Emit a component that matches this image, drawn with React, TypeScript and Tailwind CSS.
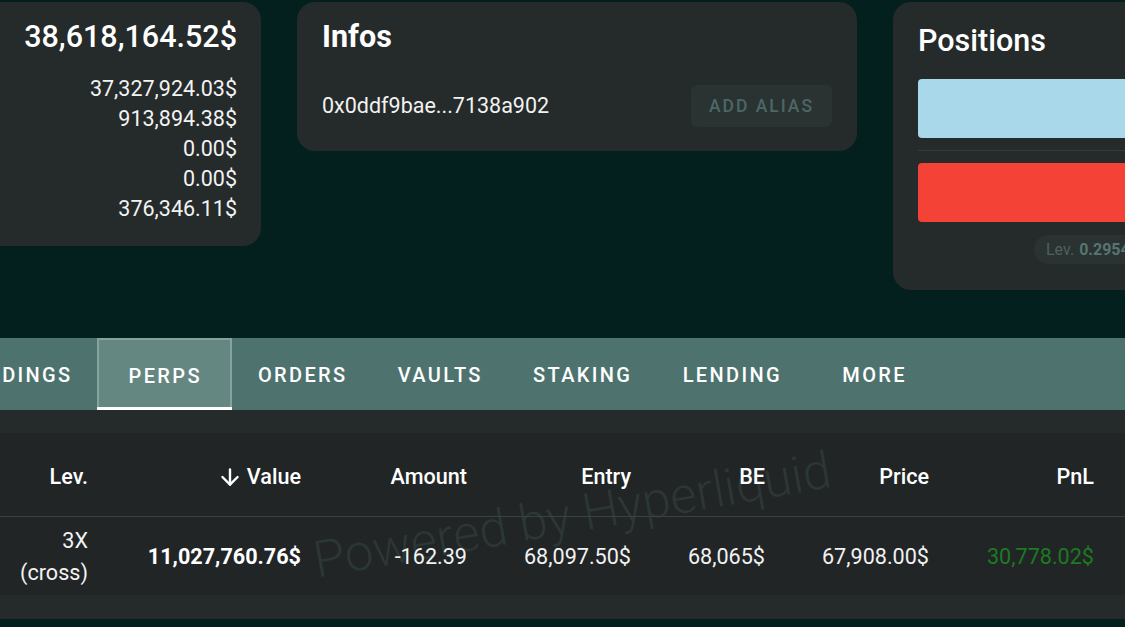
import { ArrowDown } from "lucide-react";

const balances = ["37,327,924.03$", "913,894.38$", "0.00$", "0.00$", "376,346.11$"];

const tabs = ["HOLDINGS", "PERPS", "ORDERS", "VAULTS", "STAKING", "LENDING", "MORE"];

const cols = "grid grid-cols-[88px_213px_166px_164px_134px_164px_165px]";

function Tab({ label, active }: { label: string; active?: boolean }) {
  if (active) {
    return (
      <div className="relative flex h-full min-w-[135px] items-center justify-center border-2 border-b-0 border-[#86a49f] bg-[#648782] px-6">
        <span className="pl-[2.35px] pt-[1px] text-[20px] font-medium tracking-[2.35px] text-white">{label}</span>
        <div className="absolute -left-[2px] -right-[2px] bottom-0 h-[3px] bg-white" />
      </div>
    );
  }
  return (
    <div className="flex h-full min-w-[135px] items-center justify-center px-6">
      <span className="pl-[2.35px] pt-[1px] text-[20px] font-medium tracking-[2.35px] text-white">{label}</span>
    </div>
  );
}

export default function App() {
  return (
    <div
      className="relative h-[627px] w-[1125px] overflow-hidden bg-[#03201e] text-white"
      style={{ fontFamily: "Roboto, 'Noto Sans', sans-serif" }}
    >
      {/* cards */}
      <div className="flex items-start gap-[36px] pt-[2px]">
        <section className="-ml-[20px] flex h-[244px] w-[281px] shrink-0 flex-col items-end rounded-[18px] bg-[#252a2a] pr-[24px] pt-[16px]">
          <div className="text-[30.5px] font-medium leading-[38px]">38,618,164.52$</div>
          <div className="mt-[18px] flex flex-col items-end">
            {balances.map((b, i) => (
              <div key={i} className="text-[21.5px] leading-[30px] text-[#f2f2f2]">
                {b}
              </div>
            ))}
          </div>
        </section>

        <section className="flex h-[149px] w-[560px] shrink-0 flex-col rounded-[18px] bg-[#252a2a] px-[25px] pt-[16px]">
          <h2 className="text-[30.5px] font-bold leading-[38px]">Infos</h2>
          <div className="mt-[29px] flex items-center justify-between">
            <span className="text-[21.5px] text-[#f2f2f2]">0x0ddf9bae...7138a902</span>
            <button className="flex h-[42px] w-[141px] items-center justify-center rounded-[6px] bg-[#2a3332] text-[17.5px] font-medium tracking-[2px] text-[#4b6864]">
              ADD ALIAS
            </button>
          </div>
        </section>

        <section className="flex h-[288px] w-[320px] shrink-0 flex-col rounded-[18px] bg-[#252a2a] px-[25px] pt-[20px]">
          <h2 className="text-[30.5px] font-medium leading-[38px]">Positions</h2>
          <div className="mt-[19px] h-[59px] rounded-[4px] bg-[#a8d8ea]" />
          <div className="mt-[12px] h-px bg-[#343b3b]" />
          <div className="mt-[12px] h-[59px] rounded-[4px] bg-[#f44336]" />
          <div className="ml-[116px] mt-[13px] flex h-[29px] items-center rounded-full bg-[#2a3332] px-[12px] text-[16px]">
            <span className="text-[#4d625f]">Lev.</span>
            <span className="ml-[5px] font-bold text-[#577571]">0.2954x</span>
          </div>
        </section>
      </div>

      {/* tabs */}
      <nav className="mt-[48px] flex h-[72px] bg-[#4e736e]">
        <div className="-ml-[70px] flex h-full">
          {tabs.map((t) => (
            <Tab key={t} label={t} active={t === "PERPS"} />
          ))}
        </div>
      </nav>

      {/* table */}
      <div className="bg-[#252b2b] pb-[24px] pt-[23px]">
        <div className="relative overflow-hidden bg-[#212526]">
          {/* watermark */}
          <div className="pointer-events-none absolute left-[314px] top-[90px] origin-left -rotate-[10deg] whitespace-nowrap text-[51px] font-light text-[#2c3634]">
            Powered by Hyperliquid
          </div>
          <div className={`${cols} relative h-[84px] items-center border-b border-[#3a4241] pt-[5px] text-right text-[21.6px] font-medium`}>
            <div>Lev.</div>
            <div className="flex items-center justify-end gap-[4px]">
              <ArrowDown size={26} strokeWidth={2.2} />
              <span>Value</span>
            </div>
            <div>Amount</div>
            <div>Entry</div>
            <div>BE</div>
            <div>Price</div>
            <div>PnL</div>
          </div>
          <div className={`${cols} relative h-[78px] items-center pt-[2px] text-right text-[21.6px] text-[#f2f2f2]`}>
            <div className="leading-[32px]">
              3X
              <br />
              (cross)
            </div>
            <div className="font-bold text-white">11,027,760.76$</div>
            <div>-162.39</div>
            <div>68,097.50$</div>
            <div>68,065$</div>
            <div>67,908.00$</div>
            <div className="text-[#1c7a22]">30,778.02$</div>
          </div>
        </div>
      </div>
    </div>
  );
}
